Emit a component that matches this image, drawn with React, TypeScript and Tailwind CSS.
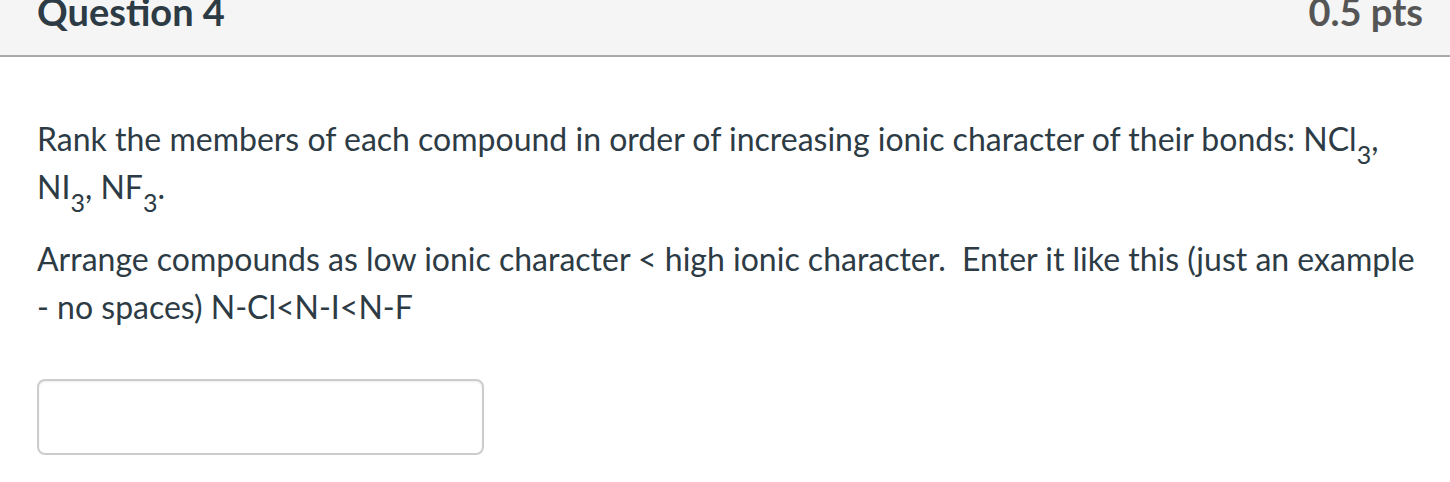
export default function App() {
  return (
    <div className="w-[1450px] h-[482px] bg-white overflow-hidden" style={{ fontFamily: "Lato, 'Noto Sans', sans-serif" }}>
      <div className="h-[57px] bg-[#f5f5f5] border-b-2 border-[#aaaaaa] flex justify-between items-start pl-[37px] pr-[27px]">
        <div className="mt-[-8px] text-[38px] leading-[38px] font-bold text-[#2d3b45]">Question 4</div>
        <div className="mt-[-8px] text-[38px] leading-[38px] font-bold text-[#555555]">0.5 pts</div>
      </div>
      <div className="pl-[37px] pr-[28px] pt-[58px] text-[32px] leading-[48px] text-[#2d3b45]">
        <p>
          Rank the members of each compound in order of increasing ionic character of their bonds: NCl<sub className="text-[25px] leading-none align-[-7px]">3</sub>, NI<sub className="text-[25px] leading-none align-[-7px]">3</sub>, NF<sub className="text-[25px] leading-none align-[-7px]">3</sub>.
        </p>
        <p className="mt-[24px]">
          Arrange compounds as low ionic character &lt; high ionic character.&nbsp; Enter it like this (just an example - no spaces) N-Cl&lt;N-I&lt;N-F
        </p>
        <div className="mt-[48px] w-[447px] h-[76px] border-2 border-[#cccccc] rounded-[8px] bg-white shadow-[inset_0_1px_2px_rgba(0,0,0,0.08)]"></div>
      </div>
    </div>
  );
}
